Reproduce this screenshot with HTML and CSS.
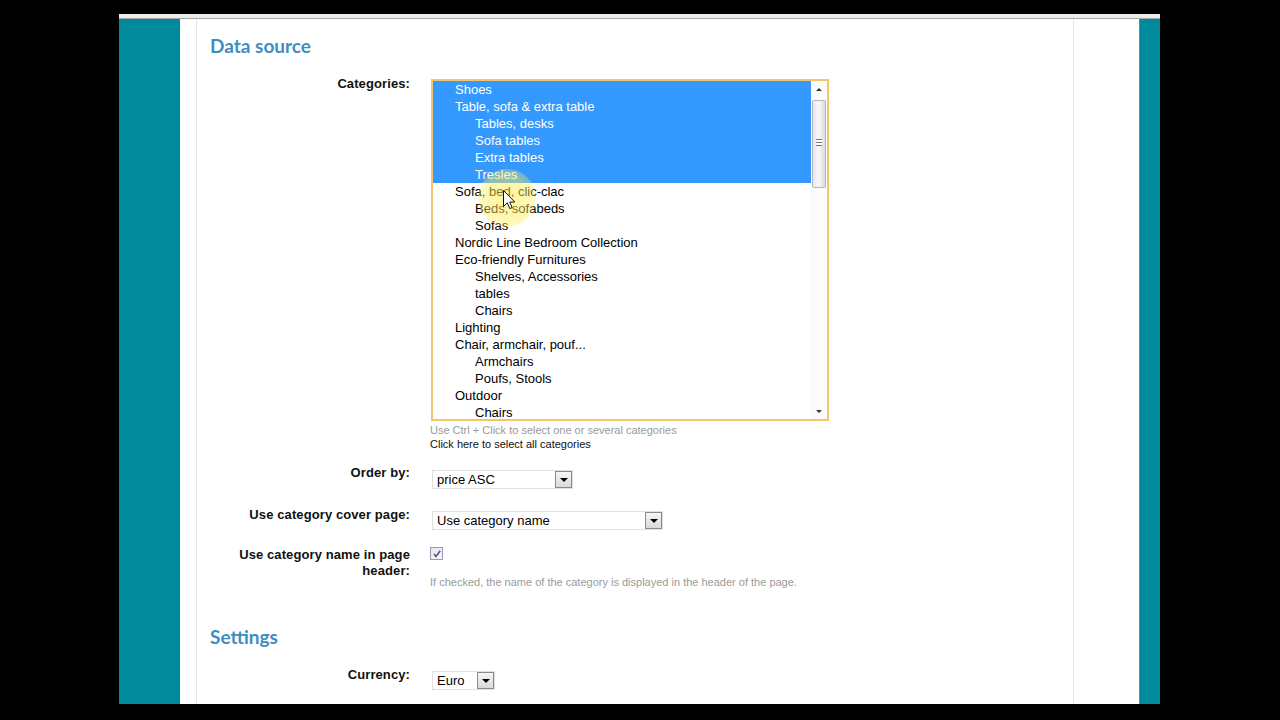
FILE: index.html
```html
<!DOCTYPE html>
<html>
<head>
<meta charset="utf-8">
<link rel="stylesheet" href="styles.css">
</head>
<body>
<div class="screen">
  <div class="frame">
    <div class="frame-top"></div>
    <div class="frame-body">
      <div class="side-left"></div>
      <div class="main">
        <div class="panel">
          <h2 class="section-title first">Data source</h2>

          <div class="row row-categories">
            <div class="label">Categories:</div>
            <div class="control">
              <div class="listbox">
                <div class="options">
                  <div class="opt l1 sel">Shoes</div>
                  <div class="opt l1 sel">Table, sofa &amp; extra table</div>
                  <div class="opt l2 sel">Tables, desks</div>
                  <div class="opt l2 sel">Sofa tables</div>
                  <div class="opt l2 sel">Extra tables</div>
                  <div class="opt l2 sel">Tresles</div>
                  <div class="opt l1">Sofa, bed, clic-clac</div>
                  <div class="opt l2">Beds, sofabeds</div>
                  <div class="opt l2">Sofas</div>
                  <div class="opt l1">Nordic Line Bedroom Collection</div>
                  <div class="opt l1">Eco-friendly Furnitures</div>
                  <div class="opt l2">Shelves, Accessories</div>
                  <div class="opt l2">tables</div>
                  <div class="opt l2">Chairs</div>
                  <div class="opt l1">Lighting</div>
                  <div class="opt l1">Chair, armchair, pouf...</div>
                  <div class="opt l2">Armchairs</div>
                  <div class="opt l2">Poufs, Stools</div>
                  <div class="opt l1">Outdoor</div>
                  <div class="opt l2">Chairs</div>
                </div>
                <div class="scrollbar">
                  <div class="sb-btn"><span class="tri-up"></span></div>
                  <div class="sb-thumb"><span class="grip"></span></div>
                  <div class="sb-track"></div>
                  <div class="sb-btn sb-down"><span class="tri-down"></span></div>
                </div>
                <div class="highlight"></div>
                <svg class="cursor" width="13" height="20" viewBox="0 0 13 20">
                  <path d="M0.5 0.5 L0.5 16.5 L4.3 12.8 L6.8 18.6 L9.1 17.6 L6.7 12 L11.8 12 Z" fill="#fff" stroke="#111" stroke-width="1" stroke-linejoin="miter"/>
                </svg>
              </div>
              <div class="hint">Use Ctrl + Click to select one or several categories</div>
              <div class="hint dark">Click here to select all categories</div>
            </div>
          </div>

          <div class="row row-order">
            <div class="label">Order by:</div>
            <div class="control">
              <div class="select w-order"><span class="sel-text">price ASC</span><span class="sel-btn"><span class="tri-down dark"></span></span></div>
            </div>
          </div>

          <div class="row row-cover">
            <div class="label">Use category cover page:</div>
            <div class="control">
              <div class="select w-cover"><span class="sel-text">Use category name</span><span class="sel-btn"><span class="tri-down dark"></span></span></div>
            </div>
          </div>

          <div class="row row-header">
            <div class="label">Use category name in page header:</div>
            <div class="control">
              <div class="checkbox">
                <svg width="10" height="10" viewBox="0 0 10 10"><path d="M2 5 L4 7.5 L8.2 1.8" fill="none" stroke="#4a5a8a" stroke-width="1.6"/></svg>
              </div>
              <div class="hint hint-check">If checked, the name of the category is displayed in the header of the page.</div>
            </div>
          </div>

          <h2 class="section-title settings">Settings</h2>

          <div class="row row-currency">
            <div class="label">Currency:</div>
            <div class="control">
              <div class="select w-currency"><span class="sel-text">Euro</span><span class="sel-btn"><span class="tri-down dark"></span></span></div>
            </div>
          </div>
        </div>
      </div>
      <div class="side-right"></div>
    </div>
  </div>
</div>
</body>
</html>
```

FILE: styles.css
```css
html, body {
  margin: 0;
  padding: 0;
  background: #000;
  height: 720px;
  overflow: hidden;
}

.screen {
  padding-top: 14px;
  padding-left: 119px;
}

.frame {
  width: 1041px;
  height: 690px;
  overflow: hidden;
  background: #fff;
}

.frame-top {
  height: 4px;
  background: #ececec;
  border-bottom: 1px solid #a8a8a8;
}

.frame-body {
  display: flex;
  height: 685px;
}

.side-left {
  width: 61px;
  background: #008a9b;
}

.side-right {
  width: 20px;
  background: #008a9b;
  border-left: 1px solid #5c8c94;
}

.main {
  flex: 1;
  background: #fff;
}

.panel {
  margin-left: 16px;
  width: 878px;
  height: 100%;
  box-sizing: border-box;
  padding-top: 15px;
  border-left: 1px solid #e4e4e4;
  border-right: 1px solid #e4e4e4;
  font-family: "Liberation Sans", Arial, sans-serif;
  color: #000;
}

.section-title {
  margin: 0;
  padding-left: 13px;
  font-family: Lato, "Open Sans", sans-serif;
  font-weight: 700;
  font-size: 19px;
  line-height: 23px;
  color: #3f8dc2;
}

.section-title.settings {
  margin-top: 36px;
}

.row {
  display: grid;
  grid-template-columns: 213px 1fr;
  column-gap: 20px;
  align-items: start;
}

.row-categories { margin-top: 19px; }
.row-order { margin-top: 14px; }
.row-cover { margin-top: 18px; }
.row-header { margin-top: 17px; }
.row-currency { margin-top: 19px; }

.label {
  text-align: right;
  font-weight: bold;
  font-size: 13px;
  line-height: 16px;
  color: #111;
  letter-spacing: 0.1px;
}

.row-header .label {
  padding-left: 20px;
}

.control {
  display: flex;
  flex-direction: column;
  align-items: flex-start;
}

/* listbox */
.listbox {
  position: relative;
  margin-top: 3px;
  margin-left: 1px;
  width: 398px;
  height: 342px;
  box-sizing: border-box;
  border: 2px solid #f3c66e;
  display: flex;
  overflow: hidden;
  background: #fff;
}

.options {
  width: 378px;
  flex: none;
}

.opt {
  height: 17px;
  line-height: 17px;
  font-size: 13px;
  white-space: nowrap;
  color: #000;
}

.opt.l1 { padding-left: 22px; }
.opt.l2 { padding-left: 42px; }

.opt.sel {
  background: #3399ff;
  color: #fff;
}

.scrollbar {
  width: 16px;
  flex: none;
  display: flex;
  flex-direction: column;
  background: #fbfbfb;
}

.sb-btn {
  height: 17px;
  flex: none;
  display: flex;
  align-items: center;
  justify-content: center;
}

.sb-down {
  height: 16px;
}

.sb-thumb {
  margin: 2px 1px 0 1px;
  height: 86px;
  flex: none;
  border: 1px solid #b7b7b7;
  border-radius: 2px;
  background: linear-gradient(90deg, #e6e6e6, #f8f8f8 45%, #dcdcdc);
  display: flex;
  align-items: center;
  justify-content: center;
}

.grip {
  width: 6px;
  height: 5px;
  border-top: 1px solid #777;
  border-bottom: 1px solid #777;
  background: linear-gradient(#fff 0, #fff 2px, #777 2px, #777 3px, #fff 3px);
  margin-bottom: 4px;
}

.sb-track {
  flex: 1;
}

.tri-up {
  width: 0;
  height: 0;
  border-left: 3px solid transparent;
  border-right: 3px solid transparent;
  border-bottom: 3px solid #333;
}

.tri-down {
  width: 0;
  height: 0;
  border-left: 3px solid transparent;
  border-right: 3px solid transparent;
  border-top: 3px solid #333;
}

.tri-down.dark {
  border-left-width: 4px;
  border-right-width: 4px;
  border-top: 4px solid #000;
}

.highlight {
  position: absolute;
  left: 45px;
  top: 88px;
  width: 58px;
  height: 58px;
  border-radius: 50%;
  background: radial-gradient(circle, rgba(255, 236, 70, 0.55) 0, rgba(255, 238, 90, 0.45) 55%, rgba(255, 240, 120, 0) 100%);
  pointer-events: none;
}

.cursor {
  position: absolute;
  left: 70px;
  top: 109px;
}

.hint {
  font-size: 11px;
  line-height: 14px;
  color: #9a9a9a;
  white-space: nowrap;
}

.listbox + .hint {
  margin-top: 2px;
}

.hint.dark {
  color: #111;
}

.hint-check {
  margin-top: 15px;
}

/* selects */
.select {
  height: 19px;
  box-sizing: border-box;
  border: 1px solid #e0e0e0;
  margin-left: 2px;
  display: flex;
  align-items: stretch;
  background: #fff;
}

.row-order .select { margin-top: 5px; }
.row-cover .select { margin-top: 4px; }
.row-currency .select { margin-top: 4px; }

.w-order { width: 141px; }
.w-cover { width: 231px; }
.w-currency { width: 63px; }

.sel-text {
  flex: 1;
  padding-left: 4px;
  font-size: 13px;
  line-height: 17px;
  color: #000;
  white-space: nowrap;
}

.sel-btn {
  width: 15px;
  height: 15px;
  flex: none;
  border: 1px solid #8a8a8a;
  background: linear-gradient(#f6f6f6, #d9d9d9);
  display: flex;
  align-items: center;
  justify-content: center;
}

.checkbox {
  width: 11px;
  height: 11px;
  border: 1px solid #9a9ab0;
  background: linear-gradient(135deg, #e4e4ea, #f8f8fb);
  display: flex;
  align-items: center;
  justify-content: center;
}
```
